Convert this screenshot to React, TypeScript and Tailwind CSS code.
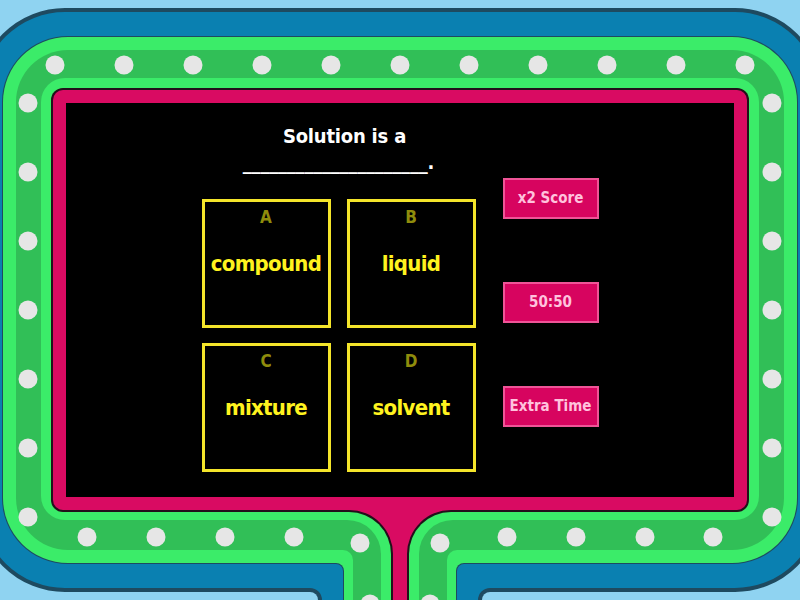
const answers = [
  { letter: "A", text: "compound" },
  { letter: "B", text: "liquid" },
  { letter: "C", text: "mixture" },
  { letter: "D", text: "solvent" },
];

const powerUps = ["x2 Score", "50:50", "Extra Time"];

// light bulbs around the frame, [x, y] centres
const sideYs = [103, 172, 241, 310, 379, 448, 517];
const bulbs: [number, number][] = [
  ...[55, 124, 193, 262, 331, 400, 469, 538, 607, 676, 745].map((x) => [x, 65] as [number, number]),
  ...sideYs.map((y) => [28, y] as [number, number]),
  ...sideYs.map((y) => [772, y] as [number, number]),
  ...[87, 156, 225, 294, 507, 576, 645, 713].map((x) => [x, 537] as [number, number]),
  [360, 543],
  [440, 543],
  [370, 604],
  [430, 604],
];

function LeftPod() {
  return (
    <div className="h-full w-[193px] rounded-tr-[44px] bg-[#22101a] pt-[2px] pr-[2px]">
      <div className="h-full rounded-tr-[42px] bg-[#3bec69] pt-[8px] pr-[10px]">
        <div className="h-full rounded-tr-[34px] bg-[#31bf57] pt-[30px] pr-[28px]">
          <div className="h-full rounded-tr-[10px] bg-[#3bec69] pt-[13px] pr-[9px]">
            <div className="h-full rounded-tr-[8px] bg-[#1e4a60] pt-[1px] pr-[1px]">
              <div className="h-full rounded-tr-[7px] bg-[#0a80b1] pt-[24px] pr-[21px]">
                <div className="h-full rounded-tr-[34px] bg-[#1e4a60] pt-[4px] pr-[4px]">
                  <div className="h-full rounded-tr-[30px] bg-[#8fd3f1]" />
                </div>
              </div>
            </div>
          </div>
        </div>
      </div>
    </div>
  );
}

function RightPod() {
  return (
    <div className="h-full w-[193px] rounded-tl-[44px] bg-[#22101a] pt-[2px] pl-[2px]">
      <div className="h-full rounded-tl-[42px] bg-[#3bec69] pt-[8px] pl-[10px]">
        <div className="h-full rounded-tl-[34px] bg-[#31bf57] pt-[30px] pl-[28px]">
          <div className="h-full rounded-tl-[10px] bg-[#3bec69] pt-[13px] pl-[9px]">
            <div className="h-full rounded-tl-[8px] bg-[#1e4a60] pt-[1px] pl-[1px]">
              <div className="h-full rounded-tl-[7px] bg-[#0a80b1] pt-[24px] pl-[21px]">
                <div className="h-full rounded-tl-[34px] bg-[#1e4a60] pt-[4px] pl-[4px]">
                  <div className="h-full rounded-tl-[30px] bg-[#8fd3f1]" />
                </div>
              </div>
            </div>
          </div>
        </div>
      </div>
    </div>
  );
}

function Screen() {
  return (
    <div className="flex h-full justify-center gap-[27px] bg-black">
      <div className="flex w-[274px] flex-col items-center pt-[20px]">
        <div className="pl-[12px] text-center text-[20px] leading-[26px] font-bold tracking-[-0.2px] text-white">
          <div>Solution is a</div>
          <div className="pr-[12px]">_____________________.</div>
        </div>
        <div className="mt-[24px] grid grid-cols-2 gap-x-[16px] gap-y-[15px]">
          {answers.map((a) => (
            <div
              key={a.letter}
              className="flex h-[129px] w-[129px] flex-col items-center border-[3px] border-[#f4e52a] pt-[5px]"
            >
              <span className="text-[17px] leading-[20px] font-bold text-[#8f8c0c]">{a.letter}</span>
              <span className="mt-[23px] text-[22px] leading-[28px] font-bold tracking-[-0.7px] text-[#fff31f]">
                {a.text}
              </span>
            </div>
          ))}
        </div>
      </div>
      <div className="flex flex-col gap-[63px] pt-[75px]">
        {powerUps.map((p) => (
          <button
            key={p}
            type="button"
            className="flex h-[41px] w-[96px] items-center justify-center border-2 border-[#ef5497] bg-[#d7045f] text-[15px] font-bold text-[#ffc2dd]"
          >
            {p}
          </button>
        ))}
      </div>
    </div>
  );
}

export default function App() {
  return (
    <div className="relative h-[600px] w-[800px] overflow-hidden bg-[#8fd3f1] [font-family:'DejaVu_Sans_Condensed','DejaVu_Sans',sans-serif] [font-stretch:condensed]">
      {/* outer blue frame */}
      <div className="mx-[-23px] mt-[8px] h-[584px] rounded-[88px] border-4 border-[#1e4a60] bg-[#0a80b1] px-[21px] py-[24px]">
        <div className="h-full rounded-[66px] bg-[#1e4a60] p-[1px]">
          <div className="h-full rounded-[65px] bg-[#3bec69] p-[13px]">
            <div className="h-full rounded-[52px] bg-[#31bf57] px-[25px] pt-[28px] pb-[30px]">
              <div className="h-full rounded-[24px] bg-[#3bec69] px-[10px] pt-[10px] pb-[8px]">
                <div className="h-full rounded-[12px] bg-[#22101a] p-[2px]">
                  <div className="h-full rounded-[10px] bg-[#d90b62] p-[13px]">
                    <Screen />
                  </div>
                </div>
              </div>
            </div>
          </div>
        </div>
      </div>

      {/* stand below the screen */}
      <div className="absolute top-[510px] left-[200px] flex h-[90px] w-[400px] justify-between bg-[#d90b62]">
        <LeftPod />
        <RightPod />
      </div>

      {bulbs.map(([x, y], i) => (
        <div
          key={i}
          className="absolute h-[19px] w-[19px] -translate-x-1/2 -translate-y-1/2 rounded-full bg-[#e6e6e6]"
          style={{ left: x, top: y }}
        />
      ))}
    </div>
  );
}
